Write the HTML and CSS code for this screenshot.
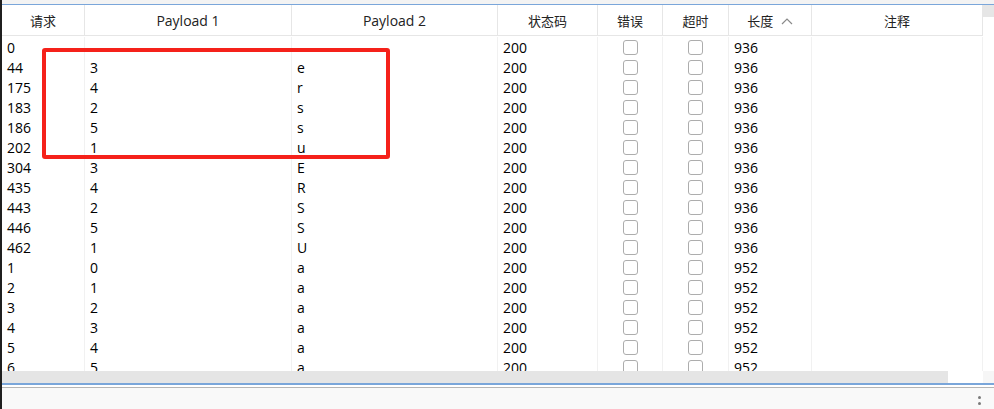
FILE: index.html
```html
<!DOCTYPE html>
<html>

<head>
    <title>Intruder Results</title>
    <meta name="viewport" content="width=device-width, initial-scale=1">
    <link rel="stylesheet" href="styles.css">
</head>

<body>
    <div class="window">
        <div class="topStrip"></div>
        <div class="tableArea">
            <div class="results">
                <div class="row headRow">
                    <div class="cell head"><span class="zh">请求</span></div>
                    <div class="cell head">Payload 1</div>
                    <div class="cell head">Payload 2</div>
                    <div class="cell head"><span class="zh">状态码</span></div>
                    <div class="cell head"><span class="zh">错误</span></div>
                    <div class="cell head"><span class="zh">超时</span></div>
                    <div class="cell head"><span class="zh">长度</span>
                        <svg class="sortIcon" width="12" height="8" viewBox="0 0 12 8">
                            <polyline points="1,7 6,2 11,7" fill="none" stroke="#8a8a8a" stroke-width="1.2" />
                        </svg>
                    </div>
                    <div class="cell head"><span class="zh">注释</span></div>
                </div>
                <div class="rows" id="rows"></div>
            </div>
            <div class="vScroll"><div class="vCorner"></div></div>
        </div>
        <div class="hScroll">
            <div class="hThumb"></div>
            <div class="hGap"></div>
            <div class="hCorner"></div>
        </div>
        <div class="blueLine"></div>
        <div class="statusBar">
            <div class="grip"><span></span><span></span></div>
        </div>
        <div class="highlight"></div>
    </div>

    <script>
        let data = [
            ["0", "", "", "200", "936"],
            ["44", "3", "e", "200", "936"],
            ["175", "4", "r", "200", "936"],
            ["183", "2", "s", "200", "936"],
            ["186", "5", "s", "200", "936"],
            ["202", "1", "u", "200", "936"],
            ["304", "3", "E", "200", "936"],
            ["435", "4", "R", "200", "936"],
            ["443", "2", "S", "200", "936"],
            ["446", "5", "S", "200", "936"],
            ["462", "1", "U", "200", "936"],
            ["1", "0", "a", "200", "952"],
            ["2", "1", "a", "200", "952"],
            ["3", "2", "a", "200", "952"],
            ["4", "3", "a", "200", "952"],
            ["5", "4", "a", "200", "952"],
            ["6", "5", "a", "200", "952"]
        ];

        function draw() {
            let html = "";
            for (let r of data) {
                html += `<div class="row">
                    <div class="cell">${r[0]}</div>
                    <div class="cell">${r[1]}</div>
                    <div class="cell">${r[2]}</div>
                    <div class="cell">${r[3]}</div>
                    <div class="cell center"><span class="check"></span></div>
                    <div class="cell center"><span class="check"></span></div>
                    <div class="cell">${r[4]}</div>
                    <div class="cell"></div>
                </div>`;
            }
            document.querySelector("#rows").innerHTML = html;
        }
        draw();
    </script>
</body>

</html>
```
FILE: styles.css
```css
* {
    box-sizing: border-box
}

body {
    font-family: "Open Sans", "Noto Sans CJK SC", sans-serif;
    font-size: 14px;
    color: #000;
    margin: 0;
    background: white;
}

.window {
    position: relative;
    width: 994px;
    height: 409px;
    border-left: 2px solid #1f1f1f;
    overflow: hidden;
    display: flex;
    flex-direction: column;
}

.topStrip {
    height: 5px;
    background: #f3f3f3;
    border-bottom: 1px solid #7aa6da;
}

.tableArea {
    height: 366px;
    display: flex;
}

.results {
    width: 981px;
    overflow: hidden;
}

.rows {
    padding-top: 1px;
}

.row {
    display: grid;
    grid-template-columns: 83px 207px 206px 100px 65px 66px 83px 171px;
    height: 20px;
}

.headRow {
    height: 31px;
    border-bottom: 1px solid #e6e6e6;
}

.cell {
    padding-left: 5px;
    padding-top: 1px;
    line-height: 20px;
    white-space: nowrap;
    border-right: 1px solid #f1f1f1;
}

.head {
    padding-left: 0;
    padding-top: 2px;
    line-height: 28px;
    text-align: center;
    color: #222;
    border-right: 1px solid #e6e6e6;
}

.zh {
    font-size: 13px;
}

.sortIcon {
    margin-left: 4px;
    vertical-align: 1px;
}

.center {
    padding-left: 0;
    padding-top: 0;
    display: flex;
    justify-content: center;
    align-items: center;
}

.check {
    width: 15px;
    height: 15px;
    border: 1px solid #adadad;
    border-radius: 3px;
    background: white;
}

.vScroll {
    width: 11px;
}

.vCorner {
    height: 12px;
    background: #e6e6e6;
}

.hScroll {
    height: 12px;
    display: flex;
}

.hThumb {
    width: 946px;
    background: #e5e5e5;
}

.hGap {
    width: 35px;
}

.hCorner {
    flex: 1;
    background: #f6f6f6;
}

.blueLine {
    height: 2px;
    background: #7aa6da;
    margin-bottom: 2px;
}

.statusBar {
    flex: 1;
    background: #f9f9f9;
    border-top: 1px solid #b5b5b5;
    position: relative;
}

.grip {
    position: absolute;
    left: 976px;
    top: 8px;
    display: flex;
    flex-direction: column;
    gap: 3px;
}

.grip span {
    width: 3px;
    height: 3px;
    border-radius: 50%;
    background: #7a7a7a;
}

.highlight {
    position: absolute;
    left: 40px;
    top: 48px;
    width: 348px;
    height: 111px;
    border: 4px solid #f5211a;
    border-radius: 3px;
}
```
